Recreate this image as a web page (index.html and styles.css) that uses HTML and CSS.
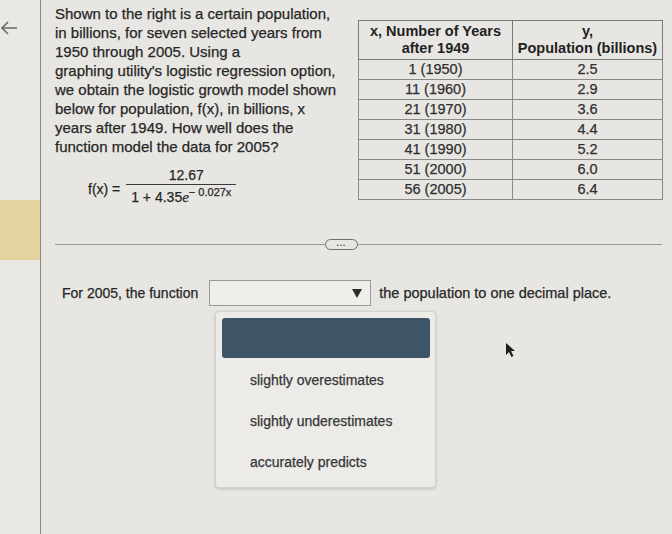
FILE: index.html
```html
<!DOCTYPE html>
<html>
<head>
<meta charset="utf-8">
<link rel="stylesheet" href="styles.css">
</head>
<body>
<div class="page">
  <aside class="sidebar">
    <div class="back">
      <svg width="18" height="16" viewBox="0 0 18 16"><path d="M17 8H2M8 2L2 8l6 6" fill="none" stroke="#6b6a67" stroke-width="1.6"/></svg>
    </div>
    <div class="mark"></div>
  </aside>
  <main class="main">
    <section class="top">
      <div class="question">
        <p class="qtext">Shown to the right is a certain population,<br>in billions, for seven selected years from<br>1950 through 2005. Using a<br>graphing utility's logistic regression option,<br>we obtain the logistic growth model shown<br>below for population, f(x), in billions, x<br>years after 1949. How well does the<br>function model the data for 2005?</p>
        <div class="formula">
          <span class="fx">f(x) =</span>
          <span class="frac">
            <span class="num">12.67</span>
            <span class="den">1 + 4.35<i>e</i><sup>&minus; 0.027x</sup></span>
          </span>
        </div>
      </div>
      <table class="data">
        <thead>
          <tr><th class="c1">x, Number of Years<br>after 1949</th><th class="c2">y,<br>Population (billions)</th></tr>
        </thead>
        <tbody>
          <tr><td>1 (1950)</td><td>2.5</td></tr>
          <tr><td>11 (1960)</td><td>2.9</td></tr>
          <tr><td>21 (1970)</td><td>3.6</td></tr>
          <tr><td>31 (1980)</td><td>4.4</td></tr>
          <tr><td>41 (1990)</td><td>5.2</td></tr>
          <tr><td>51 (2000)</td><td>6.0</td></tr>
          <tr><td>56 (2005)</td><td>6.4</td></tr>
        </tbody>
      </table>
    </section>
    <div class="divider">
      <span class="seg left"></span>
      <span class="pill">&bull;&bull;&bull;</span>
      <span class="seg right"></span>
    </div>
    <div class="answer">
      <span>For 2005, the function</span>
      <span class="select"><span class="tri"></span></span>
      <span class="after">the population to one decimal place.</span>
    </div>
    <div class="menu">
      <div class="opt-selected"></div>
      <div class="opt">slightly overestimates</div>
      <div class="opt">slightly underestimates</div>
      <div class="opt">accurately predicts</div>
    </div>
  </main>
  <svg class="cursor" width="12" height="16" viewBox="0 0 12 16"><path d="M1 1v12l3-3 2.5 5 2-1-2.5-5H10z" fill="#1c1c1c"/></svg>
</div>
</body>
</html>
```
FILE: styles.css
```css
html, body {
  margin: 0;
  padding: 0;
}
body {
  width: 672px;
  height: 534px;
  overflow: hidden;
  background: #e8e6e2;
  font-family: "Liberation Sans", Arial, sans-serif;
  color: #272727;
  -webkit-text-stroke: 0.25px currentColor;
}
.page {
  display: flex;
  width: 672px;
  height: 534px;
  position: relative;
}
.sidebar {
  width: 40px;
  flex: 0 0 40px;
  border-right: 1px solid #8d8b86;
  background: #e9e8e4;
  display: flex;
  flex-direction: column;
}
.back {
  padding: 20px 0 0 0;
  height: 16px;
}
.mark {
  margin-top: 164px;
  height: 60px;
  background: #e4d39f;
}
.main {
  flex: 1;
  display: flex;
  flex-direction: column;
}
.top {
  display: flex;
  align-items: flex-start;
  padding-left: 14px;
  height: 202px;
}
.question {
  width: 292px;
  flex: 0 0 292px;
  padding-top: 4px;
}
.qtext {
  margin: 0;
  font-size: 15px;
  line-height: 19px;
  white-space: nowrap;
}
.formula {
  margin-top: 11px;
  margin-left: 33px;
  display: flex;
  align-items: center;
  font-size: 14px;
}
.fx {
  margin-right: 6px;
  padding-top: 6px;
}
.frac {
  display: flex;
  flex-direction: column;
  align-items: center;
  width: 110px;
}
.num {
  line-height: 16px;
  padding-bottom: 1px;
  padding-left: 10px;
  border-bottom: 1px solid #3a3a3a;
  width: 100px;
  text-align: center;
}
.den {
  line-height: 16px;
  padding-top: 4px;
}
.den i {
  font-family: "Liberation Serif", serif;
  font-size: 15px;
}
.den sup {
  font-size: 11px;
  vertical-align: 6px;
  line-height: 0;
}
.data {
  margin-top: 20px;
  margin-left: 11px;
  border-collapse: collapse;
  border: 1px solid #7b7a77;
  font-size: 14.5px;
}
.data th {
  font-weight: bold;
  line-height: 17px;
  padding: 2px 0;
  border: 1px solid #7b7a77;
  color: #222;
  -webkit-text-stroke: 0;
}
.data .c1 { width: 153px; }
.data .c2 { width: 149px; }
.data td {
  text-align: center;
  line-height: 19px;
  padding: 0;
  border: 1px solid #8a8986;
  color: #303030;
}
.divider {
  margin: 36px 10px 0 14px;
  height: 12px;
  display: flex;
  align-items: center;
}
.seg {
  height: 1px;
  background: #9a9894;
}
.seg.left {
  flex: 0 0 270px;
}
.seg.right {
  flex: 1;
}
.pill {
  width: 33px;
  height: 11px;
  border: 1px solid #6f6e6b;
  border-radius: 6px;
  font-size: 6px;
  line-height: 10px;
  text-align: center;
  letter-spacing: 1px;
  color: #555;
  box-sizing: border-box;
  -webkit-text-stroke: 0;
}
.answer {
  margin-top: 30px;
  padding-left: 21px;
  display: flex;
  align-items: center;
  font-size: 14px;
  height: 26px;
}
.after {
  font-size: 14.5px;
}
.select {
  margin: 0 8px 0 11px;
  width: 162px;
  height: 26px;
  box-sizing: border-box;
  border: 1px solid #9c9a96;
  background: #efeeea;
  display: flex;
  align-items: center;
  justify-content: flex-end;
  padding-right: 8px;
}
.tri {
  width: 0;
  height: 0;
  border-left: 5px solid transparent;
  border-right: 5px solid transparent;
  border-top: 9px solid #2b2b2b;
}
.menu {
  margin-top: 5px;
  margin-left: 174px;
  width: 221px;
  height: 177px;
  box-sizing: border-box;
  background: #ecebe7;
  border: 1px solid #d4d2cd;
  border-radius: 4px;
  box-shadow: 0 1px 3px rgba(0,0,0,0.18);
  padding: 6px 5px 5px 6px;
}
.opt-selected {
  height: 40px;
  background: #3e5467;
  border-radius: 3px;
}
.opt {
  height: 41px;
  line-height: 41px;
  padding-left: 28px;
  font-size: 14px;
  color: #363636;
}
.opt:nth-child(2) {
  margin-top: 2px;
}
.cursor {
  position: absolute;
  left: 505px;
  top: 342px;
}
```
